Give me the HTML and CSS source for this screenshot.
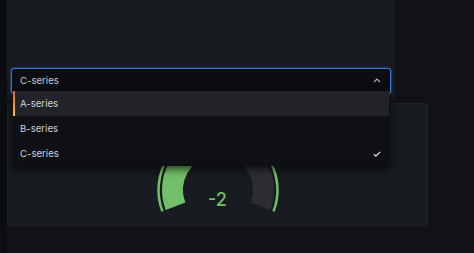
FILE: index.html
```html
<!DOCTYPE html>
<html>
<head>
<meta charset="utf-8">
<link rel="stylesheet" href="styles.css">
</head>
<body>
<div class="page">
  <div class="rail"></div>
  <div class="main">
    <div class="panel top-panel">
      <div class="select-wrap">
        <div class="select">
          <span class="select-value">C-series</span>
          <svg class="chevron" width="8" height="5" viewBox="0 0 8 5"><path d="M1 4 L4 1 L7 4" fill="none" stroke="#a8adb6" stroke-width="1.1"/></svg>
        </div>
        <div class="menu">
          <div class="option active"><span>A-series</span></div>
          <div class="option"><span>B-series</span></div>
          <div class="option"><span>C-series</span>
            <svg class="check" width="8" height="6" viewBox="0 0 8 6"><path d="M0.8 3.2 L2.9 5 L7.2 0.9" fill="none" stroke="#d8d9de" stroke-width="1.3"/></svg>
          </div>
        </div>
      </div>
    </div>
    <div class="panel bottom-panel">
      <svg class="gauge" width="130" height="86" viewBox="0 0 130 86">
        <path d="M9.45 83.33 A59.5 59.5 0 1 1 120.55 83.33" fill="none" stroke="#73bf69" stroke-width="2.5"/>
        <path d="M22.52 78.31 A45.5 45.5 0 0 1 56.32 17.34" fill="none" stroke="#73bf69" stroke-width="21"/>
        <path d="M56.32 17.34 A45.5 45.5 0 0 1 107.48 78.31" fill="none" stroke="#2c2d32" stroke-width="21"/>
        <text class="gauge-value" x="64.5" y="78" text-anchor="middle">-2</text>
      </svg>
    </div>
  </div>
</div>
</body>
</html>
```

FILE: styles.css
```css
html, body {
  margin: 0;
  padding: 0;
}
body {
  background: #111217;
  font-family: Inter, "Noto Sans", sans-serif;
  width: 474px;
  height: 253px;
  overflow: hidden;
}
.page {
  display: flex;
  height: 253px;
}
.rail {
  width: 7px;
  background: #0c0d10;
  flex: none;
}
.main {
  display: flex;
  flex-direction: column;
  gap: 3px;
}
.panel {
  background: #181b1f;
}
.top-panel {
  width: 388px;
  height: 100px;
  padding-top: 68px;
  padding-left: 4px;
  box-sizing: border-box;
}
.select-wrap {
  position: relative;
  width: 380px;
}
.select {
  height: 26px;
  box-sizing: border-box;
  border: 1px solid #3274d9;
  box-shadow: 0 0 0 0.6px rgba(50, 116, 217, 0.6);
  border-radius: 3px;
  background: #0c0d10;
  display: flex;
  align-items: center;
  justify-content: space-between;
  padding: 0 8px 2px 8px;
}
.select-value {
  color: #c7c8d2;
  font-size: 9.6px;
}
.chevron {
  margin-right: 1px;
}
.menu {
  position: absolute;
  left: 2px;
  top: 23px;
  width: 376px;
  background: #0f1013;
  box-shadow: 0 3px 8px rgba(0, 0, 0, 0.7);
  display: flex;
  flex-direction: column;
}
.option {
  height: 25px;
  display: flex;
  align-items: center;
  justify-content: space-between;
  padding: 0 7px 0 7px;
  color: #cfd0da;
  font-size: 9.6px;
  position: relative;
}
.option.active {
  background: #212328;
}
.option.active::before {
  content: "";
  position: absolute;
  left: 0;
  top: 0;
  bottom: 0;
  width: 2px;
  background: linear-gradient(#f05a28, #fbca0a);
}
.check {
  margin-right: 1px;
}
.bottom-panel {
  width: 421px;
  height: 123px;
  box-sizing: border-box;
  border: 1px solid #1f2126;
  border-radius: 3px;
  display: flex;
  flex-direction: column;
  align-items: center;
  padding-top: 24px;
}
.gauge-value {
  fill: #73bf69;
  font-size: 18px;
  font-weight: 500;
  font-family: Inter, "Noto Sans", sans-serif;
}
```
